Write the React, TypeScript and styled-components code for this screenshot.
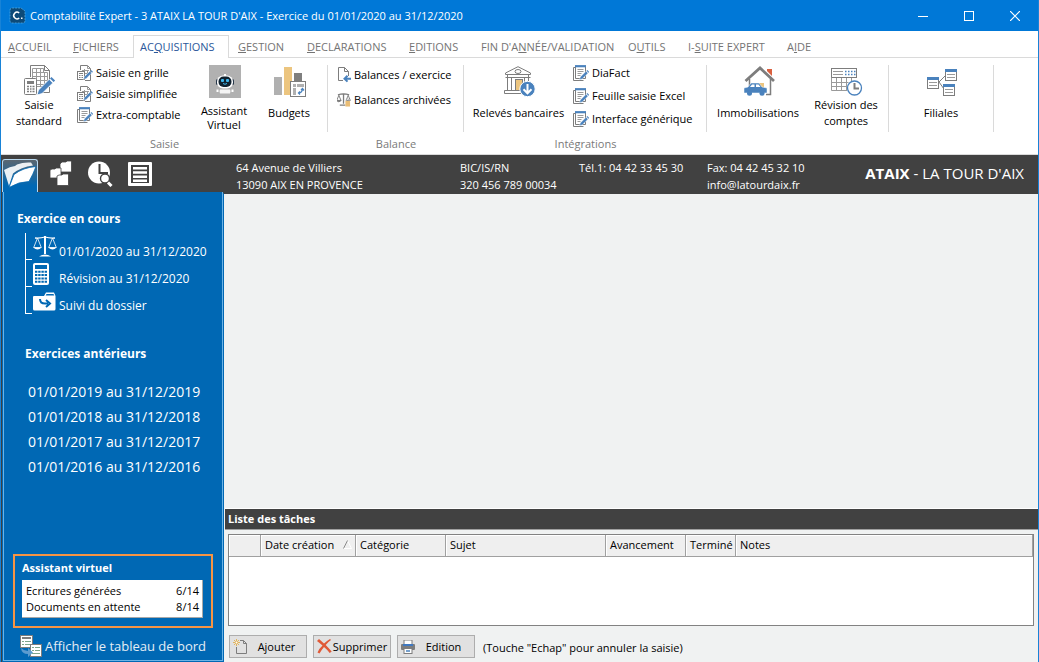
import React from "react";
import styled, { createGlobalStyle } from "styled-components";

const Global = createGlobalStyle`
  *, *::before, *::after { box-sizing: border-box; }
  body { margin: 0; font-family: "Open Sans", "Noto Sans", sans-serif; font-size: 12px; color: #000; }
  button { font: inherit; color: inherit; background: none; border: 0; padding: 0; margin: 0; cursor: pointer; }
  h1, h2, h3, p, ul { margin: 0; padding: 0; font-size: inherit; font-weight: inherit; list-style: none; }
  svg { display: block; flex: none; }
`;

const Window = styled.div`
  display: flex;
  flex-direction: column;
  min-height: 100vh;
  background: #f0f2f2;
  border-left: 1px solid #1883d7;
  border-right: 1px solid #1883d7;
`;

/* ---------- title bar ---------- */

const TitleBar = styled.header`
  display: flex;
  align-items: center;
  height: 31px;
  padding-left: 8px;
  background: #0078d7;
  color: #fff;
`;

const WindowTitle = styled.h1`
  flex: 1;
  margin-left: 4px;
  font-size: 11px;
  white-space: nowrap;
`;

const CaptionButton = styled.button`
  display: flex;
  align-items: center;
  justify-content: center;
  width: 46px;
  height: 31px;
`;

/* ---------- menu ---------- */

const Menu = styled.nav`
  display: flex;
  gap: 2px;
  height: 27px;
  padding-top: 4px;
  background: #fff;
  box-shadow: inset 0 -1px 0 #dadada;
`;

const MenuTab = styled.button<{ $width: number; $active?: boolean }>`
  width: ${(p) => p.$width}px;
  padding: 0 0 2px 6px;
  text-align: left;
  font-size: 11px;
  white-space: nowrap;
  border: 1px solid ${(p) => (p.$active ? "#dadada" : "transparent")};
  border-bottom: 0;
  color: ${(p) => (p.$active ? "#2b579a" : "#747474")};
  background: ${(p) => (p.$active ? "#fff" : "transparent")};
`;

/* ---------- ribbon ---------- */

const Ribbon = styled.section`
  display: flex;
  height: 97px;
  background: #fff;
  border-bottom: 1px solid #dadada;
`;

const Group = styled.div<{ $width: number }>`
  display: flex;
  flex-direction: column;
  width: ${(p) => p.$width}px;
  padding-top: 7px;
`;

const GroupBody = styled.div<{ $pad?: number }>`
  display: flex;
  height: 67px;
  padding-left: ${(p) => p.$pad ?? 0}px;
  border-right: 1px solid #dadada;
`;

const GroupLabel = styled.h2`
  margin-top: 4px;
  line-height: 16px;
  text-align: center;
  font-size: 11px;
  color: #7a7a7a;
`;

const BigButton = styled.button<{ $width: number; $line: number; $gap: number }>`
  display: flex;
  flex-direction: column;
  align-items: center;
  width: ${(p) => p.$width}px;
  height: 67px;
  gap: ${(p) => p.$gap}px;
  font-size: 11px;
  line-height: ${(p) => p.$line}px;
  white-space: nowrap;
  svg { margin-left: 2px; }
`;

const SmallList = styled.ul<{ $row: number; $width: number; $top?: number }>`
  display: grid;
  grid-auto-rows: ${(p) => p.$row}px;
  align-content: start;
  width: ${(p) => p.$width}px;
  padding-top: ${(p) => p.$top ?? 0}px;
`;

const SmallItem = styled.button`
  display: flex;
  align-items: center;
  gap: 3px;
  font-size: 11px;
  line-height: 16px;
  white-space: nowrap;
`;

/* ---------- body ---------- */

const Body = styled.div`
  display: flex;
  flex: 1;
`;

const Side = styled.aside`
  display: flex;
  flex-direction: column;
  width: 223px;
  background: #414141;
  color: #fff;
`;

const SideTabs = styled.nav`
  display: flex;
  align-items: center;
  height: 37px;
  padding-left: 1px;
  gap: 12px;
`;

const FolderTab = styled.button`
  align-self: flex-end;
  display: flex;
  width: 36px;
  height: 33px;
  padding: 2px 1px;
  border: 1px solid #b9d9f0;
  border-bottom: 0;
  border-radius: 3px 3px 0 0;
  background: linear-gradient(#5a6670, #0068b4 80%);
`;

const SidePanel = styled.div`
  display: flex;
  flex-direction: column;
  flex: 1;
  margin-left: 1px;
  padding: 0 1px 1px 1px;
  background: #0068b4;
  border-top-right-radius: 3px;
`;

const SideContent = styled.div`
  display: flex;
  flex-direction: column;
  flex: 1;
  padding: 18px 9px 2px 9px;
  border: 1px solid #6bb3e6;
  border-top: 0;
`;

const SideHeading = styled.h2<{ $indent: number }>`
  padding-left: ${(p) => p.$indent}px;
  font-size: 12px;
  font-weight: 700;
  line-height: 18px;
`;

const Tree = styled.ul`
  display: grid;
  grid-auto-rows: 27px;
  margin: 5px 0 31px 12px;
  border-left: 1px solid #fff;
`;

const TreeRow = styled.li`
  display: flex;
  align-items: center;
  &::before {
    content: "";
    align-self: flex-end;
    width: 6px;
    height: 1px;
    margin-right: 1px;
    background: #fff;
  }
`;

const TreeButton = styled.button`
  display: flex;
  align-items: center;
  gap: 2px;
  font-size: 12px;
  line-height: 16px;
  white-space: nowrap;
  span { padding-top: 10px; }
`;

const YearList = styled.ul`
  display: grid;
  grid-auto-rows: 25px;
  margin: 16px 0 0 15px;
`;

const YearButton = styled.button`
  font-size: 14px;
  line-height: 25px;
  white-space: nowrap;
`;

const AssistantBox = styled.section`
  margin-top: auto;
  padding: 0 8px 8px 7px;
  border: 2px solid #f79443;
`;

const AssistantTitle = styled.h2`
  font-size: 11px;
  font-weight: 700;
  line-height: 24px;
`;

const AssistantRows = styled.div`
  padding: 3px 3px 2px 4px;
  background: #fff;
  color: #000;
  border-right: 1px solid #a8a8a8;
  border-bottom: 1px solid #a8a8a8;
`;

const AssistantRow = styled.p`
  display: flex;
  justify-content: space-between;
  font-size: 11px;
  line-height: 16px;
`;

const DashboardButton = styled.button`
  display: flex;
  align-items: center;
  gap: 3px;
  margin: 6px 0 0 7px;
  font-size: 13px;
  line-height: 24px;
  white-space: nowrap;
  color: #e4edf5;
`;

const Main = styled.main`
  display: flex;
  flex-direction: column;
  flex: 1;
  min-width: 0;
`;

const InfoBar = styled.section`
  display: flex;
  height: 39px;
  padding: 4px 14px 0 12px;
  background: #414141;
  color: #fff;
  font-size: 11px;
  line-height: 17px;
  white-space: nowrap;
  a { color: inherit; text-decoration: none; }
`;

const InfoCell = styled.div<{ $width: number }>`
  width: ${(p) => p.$width}px;
`;

const Company = styled.p`
  margin-left: auto;
  font-size: 15px;
  line-height: 28px;
`;

const Workspace = styled.div`
  flex: 1;
  min-height: 120px;
`;

const TaskTitle = styled.h2`
  height: 22px;
  margin-left: 1px;
  padding-left: 3px;
  border-top: 1px solid #fff;
  border-bottom: 1px solid #a0a0a0;
  background: #414141;
  color: #fff;
  font-size: 11px;
  font-weight: 700;
  line-height: 20px;
`;

const TaskFrame = styled.div`
  height: 92px;
  margin: 4px 4px 0;
  border: 1px solid #828282;
  background: #fff;
`;

const TaskTable = styled.table`
  width: 100%;
  table-layout: fixed;
  border-collapse: separate;
  border-spacing: 0;
`;

const HeadCell = styled.th<{ $width?: number }>`
  width: ${(p) => (p.$width ? `${p.$width}px` : "auto")};
  height: 22px;
  padding: 0 0 2px 4px;
  text-align: left;
  font-size: 11px;
  font-weight: 400;
  line-height: 18px;
  white-space: nowrap;
  background: #efefef;
  border-right: 1px solid #a0a0a0;
  border-bottom: 1px solid #a0a0a0;
  box-shadow: inset 1px 1px 0 #fff;
`;

const SortLabel = styled.span`
  display: flex;
  align-items: center;
  justify-content: space-between;
  padding-right: 3px;
`;

const Actions = styled.footer`
  display: flex;
  align-items: center;
  gap: 6px;
  padding: 9px 5px 4px;
`;

const ActionButton = styled.button`
  display: flex;
  align-items: center;
  width: 78px;
  height: 23px;
  padding: 0 2px 0 3px;
  border: 1px solid #adadad;
  background: #e1e1e1;
  font-size: 11px;
  white-space: nowrap;
  span { flex: 1; text-align: center; }
`;

const Hint = styled.p`
  padding: 2px 0 0 2px;
  font-size: 11px;
`;

/* ---------- icons ---------- */

const BLUE = "#4a82bd";
const GREY = "#7d7d7d";

const Pencil = ({ x, y, s = 1 }: { x: number; y: number; s?: number }) => (
  <g transform={`translate(${x} ${y}) scale(${s})`}>
    <path d="M0 18l1.500-5L12.200 2.300l3.600 3.600L5 16.600z" fill={BLUE} stroke="#fff" strokeWidth="0.800" />
    <path d="M13 1.500L14.500 0l3.600 3.600-1.500 1.500z" fill={BLUE} />
  </g>
);

const AppLogo = () => (
  <svg width="17" height="17" viewBox="0 0 17 17">
    <path d="M1 3a2 2 0 0 1 2-2h9l4 3v10a2 2 0 0 1-2 2H3a2 2 0 0 1-2-2z" fill="#0d4a78" stroke="#4fa8e0" strokeDasharray="2 1" strokeWidth="0.800" />
    <path d="M10.200 6A3.300 3.300 0 1 0 10.200 11" fill="none" stroke="#fff" strokeWidth="1.500" />
    <rect x="12" y="10.500" width="1.500" height="1.500" fill="#fff" />
  </svg>
);

const GridEntryIcon = () => (
  <svg width="32" height="32" viewBox="0 0 32 32" fill="none" stroke={GREY}>
    <path d="M6.500 12V.5h14l5 5V15M14 27.500h11.500V22" fill="none" />
    <path d="M20.500.5v5h5" />
    <path d="M8.500 3.500h11v4h4v14h-15zM12.500 3v18M16.500 3v18M20.500 8v13M8 7.500h15M8 11.500h15M8 15.500h15M8 19.500h15" stroke="#9a9a9a" />
    <rect x=".5" y="13.500" width="12" height="16" rx="1" fill="#fff" />
    <rect x="3" y="16" width="7" height="3" fill={GREY} stroke="none" />
    <path d="M3 21.500h2m1 0h1.500m1 0h2M3 24h2m1 0h1.500m1 0h2M3 26.500h2m1 0h1.500m1 0h2" strokeWidth="1.500" />
    <g stroke="none"><Pencil x={13} y={12} /></g>
  </svg>
);

const SmallGridIcon = () => (
  <svg width="16" height="16" viewBox="0 0 16 16" fill="none" stroke={GREY}>
    <path d="M3.500 5V.5h7l3 3V15.500H8" />
    <path d="M10.500.5v3h3M5 5.500h7M5 8.500h7M7.500 4v7M10.500 5v6" stroke="#9a9a9a" />
    <rect x=".5" y="6.500" width="7" height="8" fill="#fff" />
    <path d="M2 8.500h4M2 10.500h1m.5 0h1m.5 0h1M2 12.500h1m.5 0h1m.5 0h1" />
    <g stroke="none"><Pencil x={6.5} y={5} s={0.52} /></g>
  </svg>
);

const SheetIcon = () => (
  <svg width="16" height="16" viewBox="0 0 16 16" fill="none" stroke={GREY}>
    <path d="M2.500 2.500h-2v13h10" />
    <path d="M2.500 1v12.500h10V1" fill="#fff" />
    <path d="M2 1.200h11" stroke={BLUE} strokeWidth="2.200" />
    <path d="M4.500 4.500h6M4.500 6.500h6M4.500 8.500h4M4.500 10.500h3" stroke="#9a9a9a" />
    <g stroke="none"><Pencil x={6.5} y={5} s={0.54} /></g>
  </svg>
);

const RobotIcon = () => (
  <svg width="32" height="33" viewBox="0 0 32 33">
    <rect width="32" height="33" fill="#b1b1b1" />
    <rect x="15" y="9" width="2" height="3" fill="#fff" />
    <rect x="7" y="14" width="3" height="6" rx="1.500" fill="#28384a" />
    <rect x="22" y="14" width="3" height="6" rx="1.500" fill="#28384a" />
    <rect x="8" y="10.500" width="16" height="13" rx="6" fill="#fff" />
    <rect x="9.500" y="11.500" width="13" height="10.500" rx="5" fill="#10222f" />
    <rect x="12" y="14" width="3" height="3" rx="1" fill="#3fb8ee" />
    <rect x="17" y="14" width="3" height="3" rx="1" fill="#3fb8ee" />
    <path d="M14 18.500q2 1.500 4 0" stroke="#3fb8ee" fill="none" />
    <path d="M11 24.500h10q1 1.500 0 4h-10q-1-2.500 0-4z" fill="#f4f4f4" />
    <path d="M8.500 24.500v2.500M23.500 24.500v2.500" stroke="#fff" strokeWidth="2" />
  </svg>
);

const BudgetIcon = () => (
  <svg width="32" height="32" viewBox="0 0 32 32">
    <rect x="0" y="12" width="8" height="18" fill="#b0b0b0" />
    <rect x="10" y="2" width="8" height="28" fill="#ecc57f" />
    <rect x="20" y="8" width="8" height="9" fill="#7f7f7f" />
    <rect x="16.500" y="16.500" width="15" height="15" fill="#fff" stroke={GREY} />
    <path d="M19 19h3v3h-3zM23 19h7v3h-7zM19 23h3v7h-3z" fill="#b0b0b0" />
    <path d="M24.500 28q3.500 0 4-4M27 25l1.500-1.500L30 25.500M26 26.500L24.500 28l1.500 1.500" fill="none" stroke={BLUE} strokeWidth="1.300" />
  </svg>
);

const ImportDocIcon = () => (
  <svg width="14" height="16" viewBox="0 0 14 16" fill="none" stroke={GREY}>
    <path d="M6 13.500H1.500V.5h6l4 4V9M7.500.5v4h4" />
    <path d="M14 11.700H8.500M10.500 8.800L7.500 11.700l3 2.900" stroke={BLUE} strokeWidth="2" />
  </svg>
);

const ArchiveScaleIcon = () => (
  <svg width="14" height="16" viewBox="1 0 15 16" fill="none" stroke={GREY}>
    <path d="M2 2.500q6-2 12 0M8 1v11M4 13.500h6" strokeWidth="1.400" />
    <path d="M3 3L.7 8.500h4.600zM13 3l-2.300 5.500h4.600z" />
    <path d="M.5 8.500q2.500 3 5 0z" fill={GREY} />
    <rect x="10" y="9" width="5" height="6" fill="#e9bd76" stroke="none" />
    <path d="M11 9V7.500q1.500-1.500 3 0V9" stroke="#b0b0b0" />
  </svg>
);

const BankIcon = () => (
  <svg width="32" height="32" viewBox="0 0 32 32" fill="none" stroke={GREY}>
    <path d="M1.500 9.500V8L14 1.700 26.500 8v1.500zM1.500 12.500h25M3.500 9v3M24.500 9v3" fill="#fff" />
    <ellipse cx="14" cy="6.500" rx="3" ry="2" />
    <path d="M3.500 13v12M7.500 13v12M20.500 13v5M24.500 13v3M2.500 25.500h15M.5 28.500h17v-3H.5z" />
    <rect x="11.500" y="14.500" width="7" height="11" fill="#ecc57f" />
    <circle cx="23.500" cy="24" r="7.700" fill={BLUE} stroke="#fff" />
    <path d="M23.500 19v9M19.500 24.300l4 4 4-4" stroke="#fff" strokeWidth="2" />
  </svg>
);

const HouseIcon = () => (
  <svg width="31" height="31" viewBox="0 0 31 31">
    <path d="M23 4h5v7l-5-5z" fill="#d9603f" />
    <path d="M5.500 14v12M26.500 14v15.500H22" fill="none" stroke={GREY} strokeWidth="1.500" />
    <rect x="13" y="18" width="7" height="6" fill="#ecc57f" />
    <path d="M1.500 16L16 3 30 16" fill="none" stroke={GREY} strokeWidth="2.800" />
    <path d="M0 28v-5l4-1 3-4h8l3 4 5 1v5z" fill={BLUE} stroke="#fff" strokeWidth="0.500" />
    <path d="M6 22l2-2.500h2.500V22zM12 22v-2.500h2.500l2 2.500z" fill="#fff" />
    <circle cx="5.500" cy="28.300" r="2.500" fill={BLUE} />
    <circle cx="18" cy="28.300" r="2.500" fill={BLUE} />
  </svg>
);

const RevisionIcon = () => (
  <svg width="32" height="32" viewBox="0 -2 32 32" fill="none" stroke={GREY}>
    <rect x=".5" y="1.500" width="25" height="9" />
    <path d="M2 4.500h10M2 7.500h10" stroke="#9a9a9a" />
    <path d="M14 4.500h11M14 7.500h11" stroke={BLUE} strokeDasharray="1.500 1.500" strokeWidth="1.500" />
    <path d="M.5 10.500v13H16M5.500 11v12M10.500 11v12M15.500 11v12M20.500 11v3M.5 15.500h17M.5 19.500h15" stroke="#9a9a9a" />
    <circle cx="23.500" cy="21" r="7" fill="#fff" stroke={BLUE} strokeWidth="1.300" />
    <path d="M23.500 16v5.500H28" strokeWidth="2" />
  </svg>
);

const Box = ({ x, y }: { x: number; y: number }) => (
  <g>
    <rect x={x + 0.5} y={y + 0.5} width="11" height="11" fill="#fff" stroke={GREY} />
    <rect x={x} y={y} width="12" height="3" fill={BLUE} />
    <path d={`M${x + 2} ${y + 5.5}h8M${x + 2} ${y + 8.5}h8`} stroke="#9a9a9a" />
  </g>
);

const SubsidiaryIcon = () => (
  <svg width="31" height="32" viewBox="0 -3 31 32">
    <path d="M12 14l7-7M12 14l5 7" stroke={GREY} fill="none" />
    <Box x={18} y={1} />
    <Box x={0} y={9} />
    <Box x={16} y={16} />
  </svg>
);

const OpenFolderIcon = () => (
  <svg width="32" height="26" viewBox="0 0 32 26" fill="#fff">
    <path d="M0 8q6-3.500 11-4l2-1.500q6-2.500 14-2L29 3.500Q17 5 9 11.500L5 24z" opacity="0.900" />
    <path d="M10 12.500Q19 5.500 32 4.500q-3 8-7 15Q15 19.500 5 25.500z" stroke="#0068b4" strokeWidth="0.800" />
  </svg>
);

const FoldersIcon = () => (
  <svg width="26" height="25" viewBox="0 0 26 25" fill="#fff" stroke="#414141" strokeWidth="0.800">
    <path d="M10 3l2-2h4l1-1h4.500v11H10z" />
    <path d="M0 9l2-1h3l1-1h5v10H0z" />
    <path d="M7 15l2-1h3l1-1h5.500v11.500H7z" />
  </svg>
);

const HistoryIcon = () => (
  <svg width="26" height="26" viewBox="0 0 26 26">
    <circle cx="11" cy="11.500" r="11" fill="#fff" />
    <path d="M11.500 3v9H20" fill="none" stroke="#414141" strokeWidth="2" />
    <circle cx="17" cy="17.500" r="4.500" fill="#fff" stroke="#414141" strokeWidth="1.400" />
    <path d="M20 21.500l3.500 3.500" stroke="#fff" strokeWidth="3" />
  </svg>
);

const ListIcon = () => (
  <svg width="26" height="24" viewBox="-2 0 26 24" fill="#fff">
    <path d="M0 1q0-1 1-1h22q1 0 1 1v22q0 1-1 1H1q-1 0-1-1z" />
    <rect x="3" y="3" width="18" height="18" fill="#414141" />
    <path d="M5 5h14v2.500H5zM5 9.200h14v2.500H5zM5 13.400h14v2.500H5zM5 17.600h14V20H5z" />
  </svg>
);

const ScaleIcon = () => (
  <svg width="24" height="24" viewBox="0 0 24 24" fill="none" stroke="#fff">
    <path d="M2 3q5 .5 10-1 5 1.500 10 1" strokeWidth="1.300" />
    <path d="M12 1v18" strokeWidth="2" />
    <path d="M4.500 3L.7 12.500h7.600zM19.500 3l-3.800 9.500h7.600z" strokeWidth="0.800" />
    <path d="M.3 12.500q4.200 4 8.400 0zM15.300 12.500q4.200 4 8.400 0zM6 21.500q6-4 12 0z" fill="#fff" stroke="none" />
  </svg>
);

const CalculatorIcon = () => (
  <svg width="24" height="24" viewBox="0 0 24 24" fill="#fff">
    <path d="M0 3q0-2 2-2h12q2 0 2 2v18q0 2-2 2H2q-2 0-2-2z" />
    <rect x="2" y="3" width="12" height="4" fill="#0068b4" />
    <path d="M2 9.800h12M2 13.100h12M2 16.400h12M2 19.700h12" stroke="#0068b4" strokeWidth="2" strokeDasharray="2.400 0.800" />
  </svg>
);

const FollowIcon = () => (
  <svg width="24" height="20" viewBox="0 0 24 20">
    <path d="M1 5h10l2-3.500h8l1.500 3.500V18q0 1.500-1.500 1.500H1.500Q0 19.500 0 18V6q0-1 1-1z" fill="#fff" />
    <path d="M13.500 3h7l.8 1.500h-8.600z" fill="#0068b4" />
    <path d="M7 8q0 4.500 5 4.500h3M13 9l4 3.500-4 3.500" fill="none" stroke="#0068b4" strokeWidth="2" />
  </svg>
);

const DashboardIcon = () => (
  <svg width="22" height="23" viewBox="0 0 22 23" fill="none">
    <rect x=".5" y=".5" width="12" height="12" fill="#fff" stroke={GREY} />
    <path d="M2 3h9" stroke={GREY} strokeWidth="2" />
    <path d="M2 6.500h2m1 0h6M2 9.500h2m1 0h6" stroke="#7ea58b" />
    <rect x="10.500" y="9.500" width="11" height="12" fill="#fff" stroke={GREY} />
    <path d="M12 12.500h2m1 0h5M12 15.500h2m1 0h5M12 18.500h8" stroke="#7ea58b" />
    <path d="M1 13q.5 6 7 6v3l5-4.500L8 13v3q-4 0-7-3z" fill="#5b9bd0" />
  </svg>
);

const NewIcon = () => (
  <svg width="16" height="16" viewBox="0 0 16 16" fill="none">
    <path d="M7 1.500h3.500l3 3v10H3.500V8M10.500 1.500v3h3" stroke={GREY} />
    <path d="M3.500 0v7M0 3.500h7M1 1l5 5M6 1L1 6" stroke="#e2b45a" />
    <circle cx="3.500" cy="3.500" r="1" fill="#fff" />
  </svg>
);

const DeleteIcon = () => (
  <svg width="15" height="15" viewBox="0 0 15 15">
    <path d="M0 2l2-2 5 4.500Q10 1.500 13 0l1 1Q11 3 8.700 6q3 3 6 6.500l-2 1.500Q9.500 10 7 8q-2.500 3-4.500 6.500L.5 13.500Q2.500 9 5.500 6.500z" fill="#e05a38" />
  </svg>
);

const PrintIcon = () => (
  <svg width="14" height="14" viewBox="0 0 14 14">
    <rect x="3" y="0" width="8" height="5" fill="#fff" stroke={GREY} />
    <rect x="0" y="4" width="14" height="6" rx="1" fill={GREY} />
    <rect x="2" y="4" width="10" height="2" fill="#3f78c0" />
    <rect x="3" y="8.500" width="8" height="5" fill="#fff" stroke={GREY} />
    <path d="M5 11h4" stroke={BLUE} strokeWidth="1.500" />
  </svg>
);

const SortIcon = () => (
  <svg width="9" height="9" viewBox="0 0 9 9" fill="none">
    <path d="M4.500.5l4 8h-8" stroke="#fff" />
    <path d="M.5 8.500L4.500.5" stroke="#8a8a8a" />
  </svg>
);

/* ---------- data ---------- */

const menu: { before: string; key: string; after: string; width: number; active?: boolean }[] = [
  { before: "", key: "A", after: "CCUEIL", width: 63 },
  { before: "", key: "F", after: "ICHIERS", width: 65 },
  { before: "AC", key: "Q", after: "UISITIONS", width: 96, active: true },
  { before: "", key: "G", after: "ESTION", width: 67 },
  { before: "", key: "D", after: "ECLARATIONS", width: 100 },
  { before: "", key: "E", after: "DITIONS", width: 70 },
  { before: "FIN D'A", key: "N", after: "NÉE/VALIDATION", width: 145 },
  { before: "O", key: "U", after: "TILS", width: 58 },
  { before: "I-", key: "S", after: "UITE EXPERT", width: 97 },
  { before: "A", key: "I", after: "DE", width: 48 },
];

const years = [2019, 2018, 2017, 2016];

const Small = ({ icon, children }: { icon: React.ReactNode; children: React.ReactNode }) => (
  <li>
    <SmallItem>
      {icon}
      {children}
    </SmallItem>
  </li>
);

const Leaf = ({ icon, children }: { icon: React.ReactNode; children: React.ReactNode }) => (
  <TreeRow>
    <TreeButton>
      {icon}
      <span>{children}</span>
    </TreeButton>
  </TreeRow>
);

export default function App() {
  return (
    <>
      <Global />
      <Window>
        <TitleBar>
          <AppLogo />
          <WindowTitle>Comptabilité Expert - 3 ATAIX LA TOUR D'AIX - Exercice du 01/01/2020 au 31/12/2020</WindowTitle>
          <CaptionButton aria-label="Réduire">
            <svg width="10" height="10" stroke="#fff"><path d="M0 5.500h10" /></svg>
          </CaptionButton>
          <CaptionButton aria-label="Agrandir">
            <svg width="10" height="10" stroke="#fff" fill="none"><rect x=".5" y=".5" width="9" height="9" /></svg>
          </CaptionButton>
          <CaptionButton aria-label="Fermer">
            <svg width="10" height="10" stroke="#fff" strokeWidth="1.200"><path d="M0 0l10 10M10 0L0 10" /></svg>
          </CaptionButton>
        </TitleBar>

        <Menu>
          {menu.map((m) => (
            <MenuTab key={m.after} $width={m.width} $active={m.active}>
              {m.before}
              <u>{m.key}</u>
              {m.after}
            </MenuTab>
          ))}
        </Menu>

        <Ribbon>
          <Group $width={327}>
            <GroupBody>
              <BigButton $width={76} $line={16} $gap={0}>
                <GridEntryIcon />
                <span>Saisie<br />standard</span>
              </BigButton>
              <SmallList $row={21} $width={115}>
                <Small icon={<SmallGridIcon />}>Saisie en grille</Small>
                <Small icon={<SmallGridIcon />}>Saisie simplifiée</Small>
                <Small icon={<SheetIcon />}>Extra-comptable</Small>
              </SmallList>
              <BigButton $width={64} $line={14} $gap={6}>
                <RobotIcon />
                <span>Assistant<br />Virtuel</span>
              </BigButton>
              <BigButton $width={66} $line={16} $gap={8}>
                <BudgetIcon />
                Budgets
              </BigButton>
            </GroupBody>
            <GroupLabel>Saisie</GroupLabel>
          </Group>

          <Group $width={136}>
            <GroupBody $pad={9}>
              <SmallList $row={25} $width={126} $top={2}>
                <Small icon={<ImportDocIcon />}>Balances / exercice</Small>
                <Small icon={<ArchiveScaleIcon />}>Balances archivées</Small>
              </SmallList>
            </GroupBody>
            <GroupLabel>Balance</GroupLabel>
          </Group>

          <Group $width={243}>
            <GroupBody>
              <BigButton $width={109} $line={16} $gap={8}>
                <BankIcon />
                Relevés bancaires
              </BigButton>
              <SmallList $row={23} $width={130}>
                <Small icon={<SheetIcon />}>DiaFact</Small>
                <Small icon={<SheetIcon />}>Feuille saisie Excel</Small>
                <Small icon={<SheetIcon />}>Interface générique</Small>
              </SmallList>
            </GroupBody>
            <GroupLabel>Intégrations</GroupLabel>
          </Group>

          <Group $width={182}>
            <GroupBody>
              <BigButton $width={102} $line={16} $gap={9}>
                <HouseIcon />
                Immobilisations
              </BigButton>
              <BigButton $width={74} $line={16} $gap={0}>
                <RevisionIcon />
                <span>Révision des<br />comptes</span>
              </BigButton>
            </GroupBody>
          </Group>

          <Group $width={105}>
            <GroupBody>
              <BigButton $width={104} $line={16} $gap={8}>
                <SubsidiaryIcon />
                Filiales
              </BigButton>
            </GroupBody>
          </Group>
        </Ribbon>

        <Body>
          <Side>
            <SideTabs>
              <FolderTab aria-label="Dossier"><OpenFolderIcon /></FolderTab>
              <button aria-label="Dossiers"><FoldersIcon /></button>
              <button aria-label="Historique"><HistoryIcon /></button>
              <button aria-label="Liste"><ListIcon /></button>
            </SideTabs>
            <SidePanel>
              <SideContent>
                <SideHeading $indent={4}>Exercice en cours</SideHeading>
                <Tree>
                  <Leaf icon={<ScaleIcon />}>01/01/2020 au 31/12/2020</Leaf>
                  <Leaf icon={<CalculatorIcon />}>Révision au 31/12/2020</Leaf>
                  <Leaf icon={<FollowIcon />}>Suivi du dossier</Leaf>
                </Tree>
                <SideHeading $indent={12}>Exercices antérieurs</SideHeading>
                <YearList>
                  {years.map((y) => (
                    <li key={y}>
                      <YearButton>01/01/{y} au 31/12/{y}</YearButton>
                    </li>
                  ))}
                </YearList>
                <AssistantBox>
                  <AssistantTitle>Assistant virtuel</AssistantTitle>
                  <AssistantRows>
                    <AssistantRow><span>Ecritures générées</span><span>6/14</span></AssistantRow>
                    <AssistantRow><span>Documents en attente</span><span>8/14</span></AssistantRow>
                  </AssistantRows>
                </AssistantBox>
                <DashboardButton>
                  <DashboardIcon />
                  Afficher le tableau de bord
                </DashboardButton>
              </SideContent>
            </SidePanel>
          </Side>

          <Main>
            <InfoBar>
              <InfoCell $width={224}>64 Avenue de Villiers<br />13090 AIX EN PROVENCE</InfoCell>
              <InfoCell $width={119}>BIC/IS/RN<br />320 456 789 00034</InfoCell>
              <InfoCell $width={128}>Tél.1: 04 42 33 45 30</InfoCell>
              <InfoCell $width={110}>Fax: 04 42 45 32 10<br /><a href="mailto:info@latourdaix.fr">info@latourdaix.fr</a></InfoCell>
              <Company><b>ATAIX</b> - LA TOUR D'AIX</Company>
            </InfoBar>
            <Workspace />
            <TaskTitle>Liste des tâches</TaskTitle>
            <TaskFrame>
              <TaskTable>
                <thead>
                  <tr>
                    <HeadCell $width={32} aria-label="Sélection" />
                    <HeadCell $width={95}><SortLabel>Date création <SortIcon /></SortLabel></HeadCell>
                    <HeadCell $width={90}>Catégorie</HeadCell>
                    <HeadCell $width={160}>Sujet</HeadCell>
                    <HeadCell $width={80}>Avancement</HeadCell>
                    <HeadCell $width={50}>Terminé</HeadCell>
                    <HeadCell>Notes</HeadCell>
                  </tr>
                </thead>
              </TaskTable>
            </TaskFrame>
            <Actions>
              <ActionButton><NewIcon /><span>Ajouter</span></ActionButton>
              <ActionButton><DeleteIcon /><span>Supprimer</span></ActionButton>
              <ActionButton><PrintIcon /><span>Edition</span></ActionButton>
              <Hint>(Touche "Echap" pour annuler la saisie)</Hint>
            </Actions>
          </Main>
        </Body>
      </Window>
    </>
  );
}
